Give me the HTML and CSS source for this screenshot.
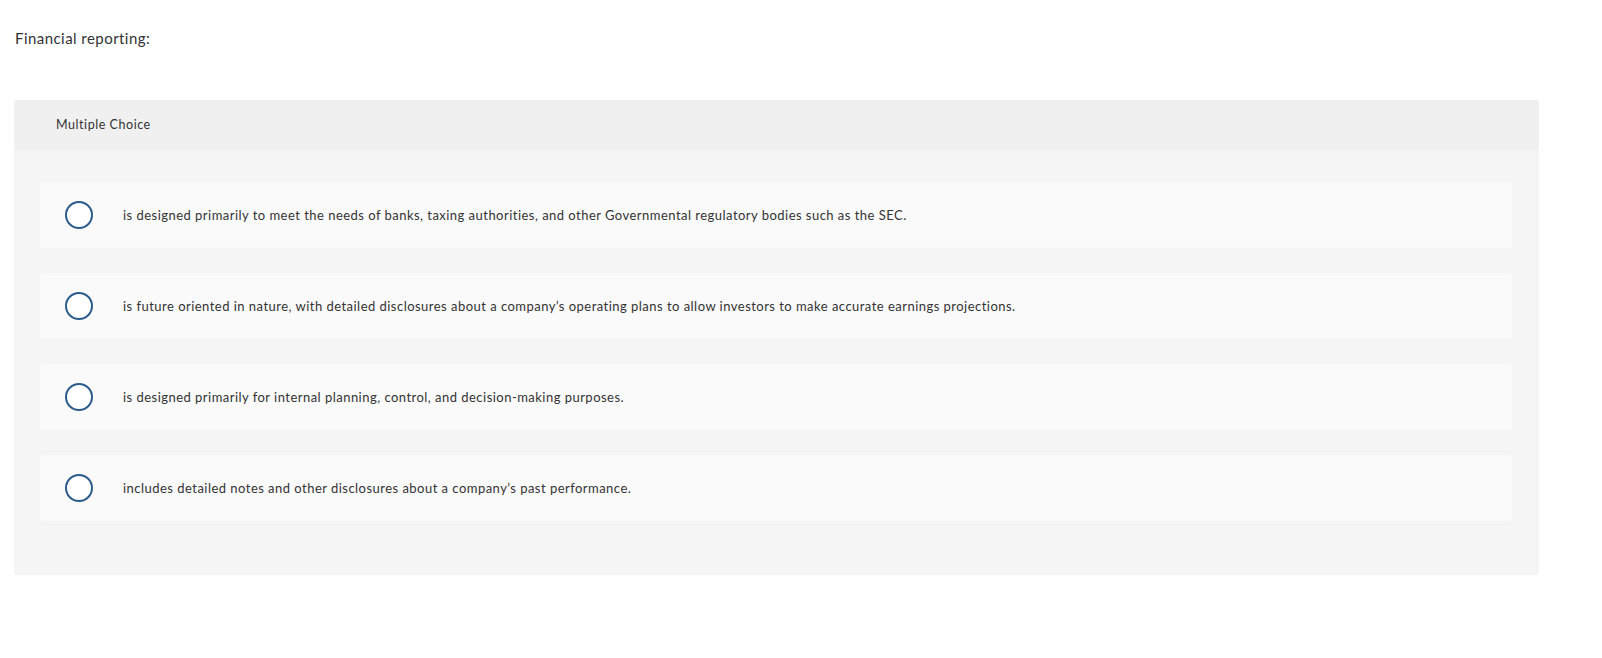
FILE: index.html
```html
<!DOCTYPE html>
<html lang="en">
  <head>
    <meta charset="UTF-8" />
    <meta name="viewport" content="width=device-width, initial-scale=1.0" />
    <title>Financial reporting</title>
    <link rel="stylesheet" href="styles.css">
  </head>
  <body>
    <p class="prompt">Financial reporting:</p>

    <div class="question">
      <div class="question-header">Multiple Choice</div>
      <div class="choices">
        <label class="choice">
          <input type="radio" name="answer" />
          <span class="radio"></span>
          <span class="choice-text">is designed primarily to meet the needs of banks, taxing authorities, and other Governmental regulatory bodies such as the SEC.</span>
        </label>
        <label class="choice">
          <input type="radio" name="answer" />
          <span class="radio"></span>
          <span class="choice-text">is future oriented in nature, with detailed disclosures about a company’s operating plans to allow investors to make accurate earnings projections.</span>
        </label>
        <label class="choice">
          <input type="radio" name="answer" />
          <span class="radio"></span>
          <span class="choice-text">is designed primarily for internal planning, control, and decision-making purposes.</span>
        </label>
        <label class="choice">
          <input type="radio" name="answer" />
          <span class="radio"></span>
          <span class="choice-text">includes detailed notes and other disclosures about a company’s past performance.</span>
        </label>
      </div>
    </div>
  </body>
</html>
```

FILE: styles.css
```css
body {
  font-family: Lato, "Noto Sans", Arial, sans-serif;
  color: #333;
  margin: 0;
  padding: 0 63px 0 14px;
}

.prompt {
  font-size: 15px;
  letter-spacing: 0.45px;
  margin: 29px 0 0 1px;
  line-height: 18px;
}

.question {
  margin-top: 53px;
  background-color: #f5f5f5;
  border-radius: 3px;
  overflow: hidden;
}

.question-header {
  background-color: #f0f0f0;
  height: 50px;
  line-height: 50px;
  padding-left: 42px;
  font-size: 12.5px;
  letter-spacing: 0.55px;
}

.choices {
  display: flex;
  flex-direction: column;
  gap: 25px;
  padding: 32px 27px 54px 26px;
}

.choice {
  display: flex;
  align-items: center;
  height: 66px;
  background-color: #fafafa;
  border-radius: 3px;
  padding-left: 25px;
  cursor: pointer;
}

.choice input {
  display: none;
}

.radio {
  width: 24px;
  height: 24px;
  border: 2px solid #2b5b8b;
  border-radius: 50%;
  background-color: #fff;
  flex-shrink: 0;
}

.choice-text {
  margin-left: 30px;
  font-size: 13px;
  letter-spacing: 0.47px;
}
```
